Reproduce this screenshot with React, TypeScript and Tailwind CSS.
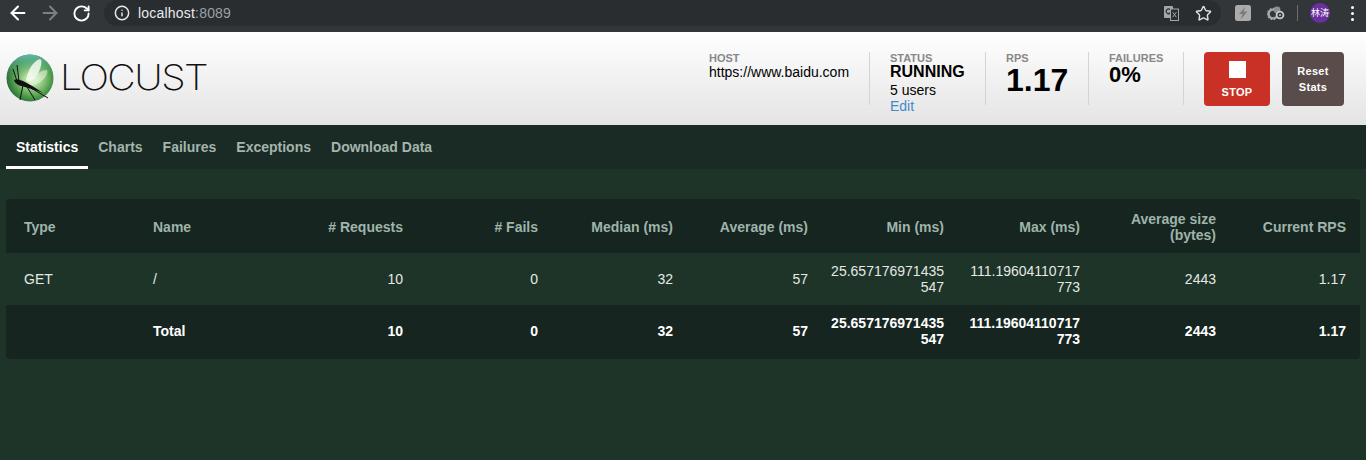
import React from 'react';
import { ArrowLeft, ArrowRight, RotateCw, Info, Star } from 'lucide-react';

const Logo = () => (
  <svg width="48" height="48" viewBox="0 0 48 48" className="shrink-0">
    <defs>
      <radialGradient id="ball" cx="0.55" cy="0.5" r="0.55">
        <stop offset="0" stopColor="#eef8e4" />
        <stop offset="0.35" stopColor="#a5d592" />
        <stop offset="0.75" stopColor="#4c9a48" />
        <stop offset="1" stopColor="#2a6a3a" />
      </radialGradient>
      <linearGradient id="rim" x1="0" y1="0" x2="0" y2="1">
        <stop offset="0" stopColor="#5fb8b0" />
        <stop offset="0.5" stopColor="#4f9a48" stopOpacity="0" />
      </linearGradient>
    </defs>
    <circle cx="24" cy="24" r="23.5" fill="url(#ball)" />
    <circle cx="24" cy="24" r="23.5" fill="url(#rim)" />
    <path d="M20 27 C21 17 27 7 34 5 C37 6 35 15 31 21 C28 26 23 29 20 27Z" fill="#f4fbef" opacity="0.85" />
    <path d="M22 29 C28 22 36 15 41 16 C43 20 37 27 31 30 C27 32 24 32 22 29Z" fill="#eaf6e0" opacity="0.55" />
    <path d="M8 26 C11 24 14 26 17 27 C23 30 30 34 37 39 C30 36 24 35 19 33 C14 32 9 30 8 26Z" fill="#111" />
    <path d="M13 27 L11 11 M11 27 L7 15 M17 31 L14 46 M21 33 L29 46 M25 34 L42 44" stroke="#111" strokeWidth="1" fill="none" />
  </svg>
);

const Stat = ({ label, children, className }: { label: string; children: React.ReactNode; className: string }) => (
  <div className={`h-[53px] border-r border-[#d4d4d4] ${className}`}>
    <div className="text-[11px] leading-[12px] font-bold text-[#888]">{label}</div>
    {children}
  </div>
);

const rows = [
  { type: 'GET', name: '/', bold: false },
  { type: '', name: 'Total', bold: true },
];

const headCell = 'align-middle pl-[6px] pr-3.5 pt-px text-right font-bold leading-4 text-[#9fb4ab]';
const headLeft = 'pl-[18px] pt-px text-left font-bold leading-4 text-[#9fb4ab]';

export default function App() {
  return (
    <div className="h-[460px] w-[1366px] overflow-hidden bg-[#1f3429] font-['Liberation_Sans',Arial,sans-serif] text-sm">
      {/* browser toolbar */}
      <div className="flex h-8 items-center bg-[#323639] pb-1.5">
        <div className="flex w-[104px] items-center pl-[7px] text-white">
          <ArrowLeft size={22} strokeWidth={2.2} />
          <ArrowRight size={22} strokeWidth={2.2} className="ml-2.5 text-[#7d8083]" />
          <RotateCw size={19} strokeWidth={2.4} className="ml-[11px]" />
        </div>
        <div className="flex h-[26px] w-[1117px] items-center rounded-full bg-[#2a2d30] pl-2.5 pr-[9px]">
          <Info size={16} strokeWidth={2.2} className="text-[#e8eaed]" />
          <span className="ml-2 text-[14px] tracking-[0.2px] text-[#e8eaed]">
            localhost<span className="text-[#9aa0a6]">:8089</span>
          </span>
          <svg width="15" height="15" viewBox="0 0 15 15" className="ml-auto mr-4">
            <rect x="0" y="0" width="9" height="12" rx="1" fill="#a4a7aa" />
            <path d="M6.3 3.6A2.4 2.4 0 1 0 6.4 7H4.6" fill="none" stroke="#2a2d30" strokeWidth="1.1" />
            <rect x="6.5" y="3" width="8" height="11.5" fill="#2a2d30" stroke="#a4a7aa" />
            <path d="M8.7 6.2l3.6 5M12.3 6.2l-3.6 5" stroke="#a4a7aa" strokeWidth="1" />
          </svg>
          <Star size={17} strokeWidth={2} className="text-[#dfe1e5]" />
        </div>
        <svg width="16" height="16" viewBox="0 0 16 16" className="ml-[14px]">
          <rect width="16" height="16" rx="2.5" fill="#ababab" />
          <path d="M10.5 1.5L4 9H7.5L5.5 14.5L12.5 6.5H8.5Z" fill="#7b7b7b" />
        </svg>
        <svg width="18" height="14" viewBox="0 0 18 14" className="ml-4">
          <circle cx="6" cy="8" r="4.4" fill="none" stroke="#a4a7aa" strokeWidth="2.4" />
          <circle cx="6" cy="8" r="5.6" fill="none" stroke="#a4a7aa" strokeWidth="1.2" strokeDasharray="1.6 1.6" />
          <circle cx="10" cy="4" r="3.4" fill="#8d9093" />
          <circle cx="13" cy="9" r="3.4" fill="#323639" stroke="#c6c8ca" strokeWidth="1.8" />
          <circle cx="13" cy="9" r="1" fill="#c6c8ca" />
        </svg>
        <div className="ml-3 h-4 w-px bg-[#6a6e72]" />
        <div className="ml-3 flex h-5 w-5 items-center justify-center rounded-full bg-[#6b2fa0] font-['Noto_Sans_CJK_SC',sans-serif] text-[9px] text-white">
          林涛
        </div>
        <div className="ml-[21px] flex flex-col gap-[3px]">
          <span className="h-[3px] w-[3px] rounded-full bg-white" />
          <span className="h-[3px] w-[3px] rounded-full bg-white" />
          <span className="h-[3px] w-[3px] rounded-full bg-white" />
        </div>
      </div>

      {/* locust header */}
      <div className="flex h-[93px] items-start bg-gradient-to-b from-white to-[#e4e4e4] text-black">
        <div className="ml-[6px] mt-[22px] flex items-center">
          <Logo />
          <span className="mb-[2px] ml-[6px] origin-left scale-x-[1.12] font-['Inter',sans-serif] text-[35px] font-extralight leading-none tracking-[-1.4px] text-[#111]">
            LOCUST
          </span>
        </div>
        <div className="ml-auto mt-5 flex items-start">
          <Stat label="HOST" className="w-[161px]">
            <div className="leading-[16px]">https://www.baidu.com</div>
          </Stat>
          <Stat label="STATUS" className="w-[116px] pl-5">
            <div className="text-base font-bold leading-[16px]">RUNNING</div>
            <div className="mt-[2px] leading-[16px]">5 users</div>
            <a className="block leading-[16px] text-[#428bca]">Edit</a>
          </Stat>
          <Stat label="RPS" className="w-[103px] pl-5">
            <div className="text-[32px] font-bold leading-[32px]">1.17</div>
          </Stat>
          <Stat label="FAILURES" className="w-[95px] pl-5">
            <div className="text-[22px] font-bold leading-[22px]">0%</div>
          </Stat>
          <button className="ml-5 flex h-[54px] w-[66px] flex-col items-center rounded-[4px] bg-[#c93026] pt-[9px] text-[11px] font-bold text-white">
            <span className="h-[17px] w-[17px] bg-white" />
            <span className="mt-[7px] tracking-[0.3px]">STOP</span>
          </button>
          <button className="ml-3 mr-[22px] h-[54px] w-[62px] rounded-[4px] bg-[#5a4c4a] text-[11px] font-bold leading-[16px] tracking-[0.3px] text-white">
            Reset
            <br />
            Stats
          </button>
        </div>
      </div>

      {/* tabs */}
      <nav className="flex h-11 bg-[#1a2a24] pl-[6px] font-bold">
        {['Statistics', 'Charts', 'Failures', 'Exceptions', 'Download Data'].map((tab, i) => (
          <a
            key={tab}
            className={`border-b-[3px] px-2.5 pt-[14px] leading-[16px] ${i === 0 ? 'border-white text-white' : 'border-transparent text-[#a3b5ac]'}`}
          >
            {tab}
          </a>
        ))}
      </nav>

      {/* stats table */}
      <div className="mx-[6px] mt-[30px] overflow-hidden rounded-[4px] bg-[#16251f]">
        <table className="w-[1354px] table-fixed border-collapse text-[#e4e9e6]">
          <colgroup>
            <col className="w-[129px]" />
            <col className="w-[147px]" />
            <col className="w-[135px]" />
            <col className="w-[135px]" />
            <col className="w-[135px]" />
            <col className="w-[135px]" />
            <col className="w-[136px]" />
            <col className="w-[136px]" />
            <col className="w-[136px]" />
            <col className="w-[130px]" />
          </colgroup>
          <thead>
            <tr className="h-[54px]">
              <th className={headLeft}>Type</th>
              <th className={headLeft}>Name</th>
              <th className={headCell}># Requests</th>
              <th className={headCell}># Fails</th>
              <th className={headCell}>Median (ms)</th>
              <th className={headCell}>Average (ms)</th>
              <th className={headCell}>Min (ms)</th>
              <th className={headCell}>Max (ms)</th>
              <th className={headCell}>Average size (bytes)</th>
              <th className={headCell}>Current RPS</th>
            </tr>
          </thead>
          <tbody>
            {rows.map((row) => {
              const cell = `align-middle pl-[6px] pr-3.5 text-right break-all leading-[16px] ${row.bold ? 'pb-0.5' : ''}`;
              return (
                <tr
                  key={row.name}
                  className={row.bold ? 'h-[54px] font-bold text-white' : 'h-[52px] bg-[#1f3429]'}
                >
                  <td className={`pl-[18px] ${row.bold ? 'pb-0.5' : ''}`}>{row.type}</td>
                  <td className={`pl-[18px] ${row.bold ? 'pb-0.5' : ''}`}>{row.name}</td>
                  <td className={cell}>10</td>
                  <td className={cell}>0</td>
                  <td className={cell}>32</td>
                  <td className={cell}>57</td>
                  <td className={cell}>25.657176971435547</td>
                  <td className={cell}>111.19604110717773</td>
                  <td className={cell}>2443</td>
                  <td className={cell}>1.17</td>
                </tr>
              );
            })}
          </tbody>
        </table>
      </div>
    </div>
  );
}
